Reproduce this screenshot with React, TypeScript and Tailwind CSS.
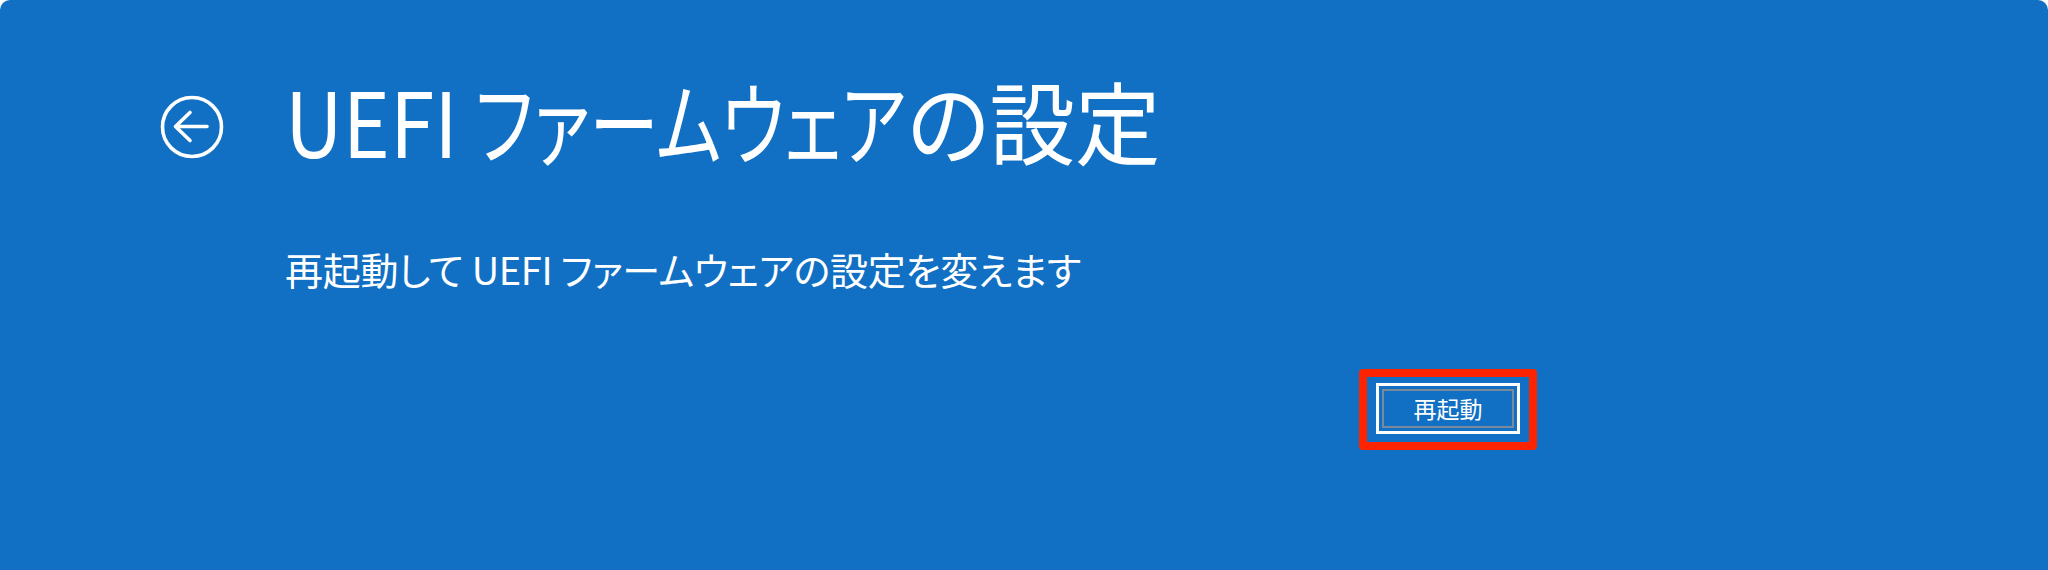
import React from "react";

export default function App() {
  return (
    <div className="w-[2048px] h-[570px] bg-white overflow-hidden">
      <div
        className="w-full h-full bg-[#1170c3] rounded-t-[10px] text-white pl-[160px] pt-[87px]"
        style={{ fontFamily: '"Noto Sans CJK JP", "Noto Sans", sans-serif' }}
      >
        <div className="flex items-start">
          <svg width="64" height="64" viewBox="0 0 64 64" fill="none" className="shrink-0 mt-[8px]">
            <circle cx="32" cy="32" r="29.5" stroke="white" strokeWidth="3.6" />
            <path d="M47 31.5H15.5M30 17.5L15.5 31.5L30 45.5" stroke="white" strokeWidth="3.6" strokeLinecap="round" strokeLinejoin="round" />
          </svg>
          <h1 className="ml-[61px] -mt-[8px] text-[90px] leading-[80px] font-normal [font-feature-settings:'palt'] whitespace-nowrap">
            <span className="inline-block origin-left scale-x-[0.89] mr-[-24px]">UEFI&nbsp;</span>
            <span className="inline-block origin-left scale-x-[0.774] mr-[-125px]">ファームウェア</span>
            <span className="inline-block origin-left scale-x-[0.95]">の設定</span>
          </h1>
        </div>
        <div className="pl-[125px] w-[1377px]">
          <p className="mt-[88px] text-[38px] leading-[44px] tracking-[-0.3px] [font-feature-settings:'palt'] whitespace-nowrap">
            再起動して UEFI ファームウェアの設定を変えます
          </p>
          <div className="flex justify-end mt-[78px]">
            <div className="border-[8px] border-[#ff2400] rounded-[4px] px-[9px] pt-[6px] pb-[8px]">
              <div className="border-[3px] border-white p-[3px]">
                <div className="w-[132px] h-[39px] border-2 border-[#7a8a9c] flex items-center justify-center text-[23px] leading-none">
                  再起動
                </div>
              </div>
            </div>
          </div>
        </div>
      </div>
    </div>
  );
}
